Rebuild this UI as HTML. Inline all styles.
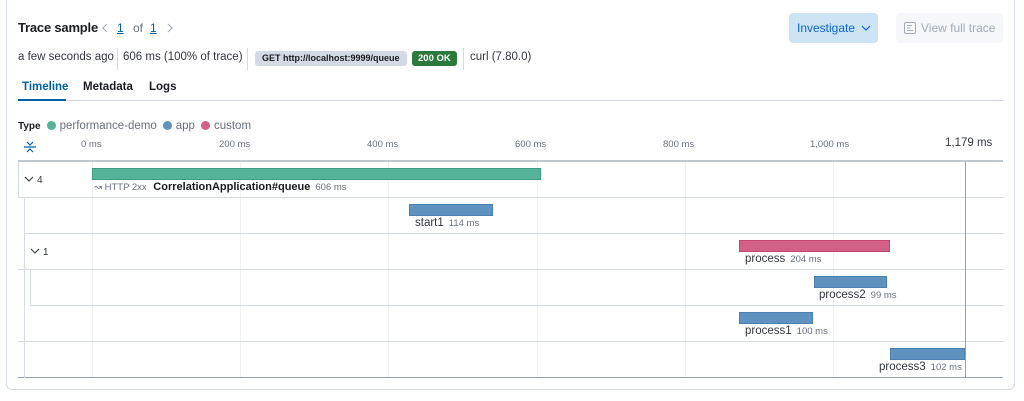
<!DOCTYPE html>
<html><head><style>
*{box-sizing:border-box;margin:0;padding:0}
body{width:1024px;height:401px;background:#fff;font-family:"Liberation Sans",sans-serif;color:#1a1c21;position:relative;overflow:hidden}
.abs{position:absolute;white-space:nowrap}
.panel{position:absolute;left:6px;top:-10px;width:1009px;height:400px;border:1px solid #d3dae6;border-radius:6px}
.row{position:absolute;left:18px;width:985px;height:36px;border-bottom:1px solid #d3dae6}
.grid{position:absolute;top:162px;width:1px;height:215px;background:#eef0f4}
.bar{position:absolute;height:12px}
.g{background:#54b399;border:1px solid #3f9c80}
.b{background:#6092c0;border:1px solid #4a7fb2}
.p{background:#d36086;border:1px solid #c24573}
.lbl{position:absolute;font-size:11.5px;color:#343741;white-space:nowrap}
.lbl small{font-size:9.5px;color:#69707d;margin-left:5px}
.ax{position:absolute;top:139px;font-size:9.5px;color:#69707d}
.dot{display:inline-block;width:9px;height:9px;border-radius:50%;margin:0 4px 0 6px;vertical-align:-1px}
</style></head><body>
<div class="panel"></div>
<div class="abs" style="left:18px;top:20px;font-size:13px;font-weight:bold;letter-spacing:-0.2px">Trace sample</div>
<svg class="abs" style="left:101px;top:23px" width="8" height="10"><path d="M6 1L2 5L6 9" fill="none" stroke="#a2abba" stroke-width="1.2"/></svg>
<div class="abs" style="left:117px;top:21px;font-size:12px;color:#0061a6;text-decoration:underline">1</div>
<div class="abs" style="left:133px;top:21px;font-size:12px;color:#69707d">of</div>
<div class="abs" style="left:150px;top:21px;font-size:12px;color:#0061a6;text-decoration:underline">1</div>
<svg class="abs" style="left:166px;top:23px" width="8" height="10"><path d="M2 1L6 5L2 9" fill="none" stroke="#a2abba" stroke-width="1.2"/></svg>
<div class="abs" style="left:789px;top:13px;width:89px;height:30px;background:#cce4f5;border-radius:4px;color:#0b64dd;font-size:12px;padding:8px 0 0 8px">Investigate <svg width="10" height="8" style="margin-left:3px"><path d="M1 2L5 6L9 2" fill="none" stroke="#0b64dd" stroke-width="1.2"/></svg></div>
<div class="abs" style="left:896px;top:13px;width:107px;height:30px;background:#f5f7fa;border-radius:4px;color:#a2abba;font-size:12px;padding:8px 0 0 8px"><svg width="12" height="12" style="vertical-align:-2px;margin-right:5px"><rect x="0.5" y="0.5" width="11" height="11" rx="1.5" fill="none" stroke="#a2abba"/><path d="M3 3.5H8M3 6H6M3 8.5H9" stroke="#a2abba"/></svg>View full trace</div>
<div class="abs" style="left:18px;top:51px;font-size:11.5px;color:#343741">a few seconds ago</div>
<div class="abs" style="left:117px;top:48px;width:1px;height:22px;background:#d3dae6"></div>
<div class="abs" style="left:123px;top:51px;font-size:11.5px;color:#343741">606 ms (100% of trace)</div>
<div class="abs" style="left:247px;top:48px;width:1px;height:22px;background:#d3dae6"></div>
<div class="abs" style="left:255px;top:51px;height:15px;width:152px;background:#d3dae6;border-radius:3px;font-size:9px;font-weight:bold;padding:2px 0 0 7px;color:#1a1c21">GET http://localhost:9999/queue</div>
<div class="abs" style="left:412px;top:51px;height:15px;width:45px;background:#2c7a3b;border-radius:3px;font-size:9.5px;font-weight:bold;padding:2px 0 0 6px;color:#fff">200 OK</div>
<div class="abs" style="left:463px;top:48px;width:1px;height:22px;background:#d3dae6"></div>
<div class="abs" style="left:470px;top:51px;font-size:11.5px;color:#343741">curl (7.80.0)</div>
<div class="abs" style="left:22px;top:81px;font-size:11.5px;font-weight:bold;color:#0061a6">Timeline</div>
<div class="abs" style="left:83px;top:81px;font-size:11.5px;font-weight:bold">Metadata</div>
<div class="abs" style="left:149px;top:81px;font-size:11.5px;font-weight:bold">Logs</div>
<div class="abs" style="left:18px;top:100px;width:985px;height:1px;background:#d3dae6"></div>
<div class="abs" style="left:18px;top:99px;width:48px;height:2px;background:#0061a6"></div>
<div class="abs" style="left:18px;top:120px;font-size:11.5px;color:#69707d"><b style="color:#1a1c21;font-size:10px">Type</b><span class="dot" style="background:#54b399"></span>performance-demo<span class="dot" style="background:#6092c0"></span>app<span class="dot" style="background:#d36086"></span>custom</div>
<svg class="abs" style="left:23px;top:140px" width="14" height="14"><path d="M1 7H13M4 2L7 5L10 2M4 12L7 9L10 12" fill="none" stroke="#0061a6" stroke-width="1.2"/></svg>
<div class="ax" style="left:81px">0 ms</div>
<div class="ax" style="left:219px">200 ms</div>
<div class="ax" style="left:367px">400 ms</div>
<div class="ax" style="left:515px">600 ms</div>
<div class="ax" style="left:663px">800 ms</div>
<div class="ax" style="left:810px">1,000 ms</div>
<div class="abs" style="left:945px;top:137px;font-size:11.5px;color:#343741">1,179 ms</div>
<div class="grid" style="left:92px"></div><div class="grid" style="left:240px"></div><div class="grid" style="left:388px"></div><div class="grid" style="left:537px"></div><div class="grid" style="left:685px"></div><div class="grid" style="left:833px"></div>
<div class="abs" style="left:18px;top:160px;width:985px;height:2px;background:#c0c7d3"></div>
<div class="row" style="top:162px;border-left:1px solid #d3dae6"></div>
<div class="row" style="top:198px;left:24px;width:979px"></div>
<div class="row" style="top:234px;left:18px"></div>
<div class="row" style="top:270px;left:30px;width:973px;border-left:1px solid #d3dae6"></div>
<div class="row" style="top:306px"></div>
<div class="row" style="top:342px;border-bottom:1px solid #98a2b3"></div>
<div class="abs" style="left:24px;top:198px;width:1px;height:180px;background:#d3dae6"></div>
<div class="abs" style="left:965px;top:162px;width:1px;height:215px;background:#98a2b3"></div>
<svg class="abs" style="left:24px;top:176px" width="10" height="7"><path d="M1 1L5 5L9 1" fill="none" stroke="#343741" stroke-width="1.1"/></svg>
<div class="abs" style="left:37px;top:175px;font-size:10px;color:#343741">4</div>
<svg class="abs" style="left:30px;top:248px" width="10" height="7"><path d="M1 1L5 5L9 1" fill="none" stroke="#343741" stroke-width="1.1"/></svg>
<div class="abs" style="left:43px;top:247px;font-size:10px;color:#343741">1</div>
<div class="bar g" style="left:92px;top:168px;width:449px"></div>
<div class="lbl" style="left:94px;top:181px;font-size:9.5px;color:#69707d">&#8605; HTTP 2xx <b style="font-size:11px;color:#1a1c21;margin-left:4px">CorrelationApplication#queue</b><small>606 ms</small></div>
<div class="bar b" style="left:409px;top:204px;width:84px"></div>
<div class="lbl" style="left:415px;top:217px">start1<small>114 ms</small></div>
<div class="bar p" style="left:739px;top:240px;width:151px"></div>
<div class="lbl" style="left:745px;top:253px">process<small>204 ms</small></div>
<div class="bar b" style="left:814px;top:276px;width:73px"></div>
<div class="lbl" style="left:819px;top:289px">process2<small>99 ms</small></div>
<div class="bar b" style="left:739px;top:312px;width:74px"></div>
<div class="lbl" style="left:745px;top:325px">process1<small>100 ms</small></div>
<div class="bar b" style="left:890px;top:348px;width:75px"></div>
<div class="lbl" style="left:879px;top:361px">process3<small>102 ms</small></div>
</body></html>
